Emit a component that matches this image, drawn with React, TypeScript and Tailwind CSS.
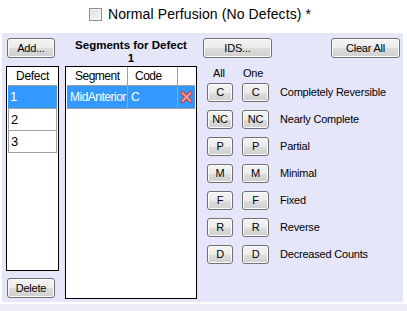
import type { ReactNode } from "react";

const btn =
  "flex items-center justify-center border border-[#707070] rounded-[3px] bg-[linear-gradient(to_bottom,#f4f4f4_0%,#ebebeb_50%,#dddddd_51%,#cfcfcf_100%)] text-[11px] tracking-[-0.2px] text-black leading-none shadow-[inset_0_0_0_1px_#fcfcfc]";

const Btn = ({ children, className }: { children: ReactNode; className: string }) => (
  <button className={`${btn} ${className}`}>{children}</button>
);

const codes = [
  { c: "C", label: "Completely Reversible" },
  { c: "NC", label: "Nearly Complete" },
  { c: "P", label: "Partial" },
  { c: "M", label: "Minimal" },
  { c: "F", label: "Fixed" },
  { c: "R", label: "Reverse" },
  { c: "D", label: "Decreased Counts" },
];

const RedX = () => (
  <svg width="13" height="12" viewBox="0 0 13 12">
    <g strokeLinecap="round">
      <path d="M2.5 2 L10.5 10 M10.5 2 L2.5 10" stroke="#c63a3a" strokeWidth="4" />
      <path d="M2.5 2 L10.5 10 M10.5 2 L2.5 10" stroke="#f09a9a" strokeWidth="2" />
    </g>
  </svg>
);

export default function App() {
  return (
    <div className="w-[407px] h-[311px] bg-white font-['Liberation_Sans',Arial,sans-serif] text-black overflow-hidden">
      {/* header checkbox */}
      <div className="h-[33px] flex items-start pt-[6px] pl-[89px] gap-[6px]">
        <span className="mt-[2px] w-[13px] h-[13px] border border-[#8e8f8f] bg-[linear-gradient(135deg,#dcdcdc,#f8f8f8)] shadow-[inset_0_0_0_1px_#f4f4f4]" />
        <span className="text-[14px] tracking-[0.1px] leading-[16px]">Normal Perfusion (No Defects) *</span>
      </div>

      {/* main panel */}
      <div className="ml-[2px] w-[401px] h-[269px] bg-[#e6e6fa] flex pl-[4px] pr-[3px] pt-[5px] pb-[3px] gap-[6px]">
        {/* defects column */}
        <div className="w-[53px] flex flex-col">
          <Btn className="ml-[1px] w-[48px] h-[20px]">Add...</Btn>
          <div className="mt-[8px] h-[205px] border border-black bg-white flex flex-col text-[12px] tracking-[-0.3px]">
            <div className="h-[19px] mx-[1px] border-b border-[#a0a0a0] text-center leading-[18px]">Defect</div>
            <div className="h-[23px] mx-[1px] bg-[#3399ff] text-white text-[13px] leading-[22px] pl-[2px] border-b border-[#a0a0a0]">1</div>
            <div className="h-[22px] mx-[1px] border-b border-x border-[#a0a0a0] text-[13px] leading-[22px] pl-[2px]">2</div>
            <div className="h-[22px] mx-[1px] border-b border-x border-[#a0a0a0] text-[13px] leading-[22px] pl-[2px]">3</div>
          </div>
          <Btn className="ml-[1px] mt-[7px] w-[48px] h-[20px]">Delete</Btn>
        </div>

        {/* segments column */}
        <div className="w-[132px] flex flex-col">
          <div className="h-[28px] text-center font-bold text-[11.5px] leading-[13px] pt-[1px]">
            Segments for Defect
            <br />1
          </div>
          <div className="flex-1 border border-black bg-white flex flex-col text-[12px] tracking-[-0.5px]">
            <div className="h-[19px] mx-[1px] flex border-b border-[#a0a0a0] leading-[18px]">
              <div className="w-[61px] border-r border-[#a0a0a0] pl-[8px]">Segment</div>
              <div className="w-[50px] border-r border-[#a0a0a0] pl-[7px]">Code</div>
              <div className="flex-1" />
            </div>
            <div className="h-[23px] mx-[1px] flex bg-[#3399ff] text-white leading-[22px] border-b border-[#a0a0a0]">
              <div className="w-[61px] border-r border-[#b0a090] pl-[3px] whitespace-nowrap overflow-hidden">MidAnterior</div>
              <div className="w-[50px] border-r border-[#b0a090] pl-[3px]">C</div>
              <div className="flex-1 flex items-center justify-center">
                <RedX />
              </div>
            </div>
          </div>
        </div>

        {/* codes column */}
        <div className="flex-1 flex flex-col">
          <div className="flex justify-between h-[20px]">
            <Btn className="w-[69px] h-[20px]">IDS...</Btn>
            <Btn className="w-[69px] h-[20px]">Clear All</Btn>
          </div>
          <div className="flex text-[11px] tracking-[-0.2px] h-[15px] mt-[9px] leading-[12px]">
            <span className="ml-[10px] w-[30px]">All</span>
            <span>One</span>
          </div>
          <div className="flex flex-col gap-[8px] mt-[1px]">
            {codes.map((r) => (
              <div key={r.c} className="flex items-center h-[19px]">
                <Btn className="ml-[4px] w-[26px] h-[19px]">{r.c}</Btn>
                <Btn className="ml-[9px] w-[27px] h-[19px]">{r.c}</Btn>
                <span className="ml-[11px] text-[11px] tracking-[-0.2px]">{r.label}</span>
              </div>
            ))}
          </div>
        </div>
      </div>
      <div className="h-[2px] bg-white" />
      <div className="h-[7px] bg-[#ececf4]" />
    </div>
  );
}
